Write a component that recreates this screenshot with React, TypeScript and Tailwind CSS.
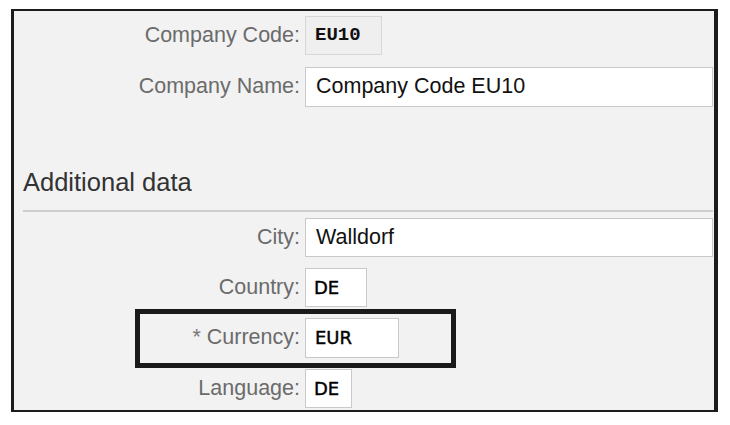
import React from "react";

const labelCls =
  "w-[286px] shrink-0 text-right text-[21.5px] text-[#6b6b6b] leading-none font-['Liberation_Sans',Arial,sans-serif]";

function Row({
  label,
  children,
  className = "",
}: {
  label: React.ReactNode;
  children: React.ReactNode;
  className?: string;
}) {
  return (
    <div className={"relative flex items-stretch " + className}>
      <div className={labelCls + " self-center"}>{label}</div>
      <div className="ml-[5px] flex">{children}</div>
    </div>
  );
}

const boxBase =
  "flex items-center border-[1.5px] border-[#c9c9c9] bg-white";
const textVal =
  "text-[21.5px] text-[#111] font-['Liberation_Sans',Arial,sans-serif] leading-none";
const codeVal =
  "text-[18px] font-normal text-[#000] font-['DejaVu_Sans',Verdana,sans-serif] leading-none [-webkit-text-stroke:0.4px_#000]";

export default function App() {
  return (
    <div className="w-[730px] h-[425px] bg-white overflow-hidden">
      <div className="ml-[11px] mt-[9px] w-[707px] h-[403px] border-l-[3px] border-t-2 border-r-4 border-b-2 border-[#1c1c1c] bg-[#f2f2f2] overflow-hidden pt-[5px]">
        <Row label="Company Code:" className="h-[39px]">
          <div className="flex items-center w-[77px] border-[1.5px] border-[#d6d6d6] bg-[#efefef] pl-[9px]">
            <span className="text-[19px] font-bold text-[#111] font-['Liberation_Mono','Courier_New',monospace] leading-none">
              EU10
            </span>
          </div>
        </Row>
        <Row label="Company Name:" className="h-[40px] mt-[12px]">
          <div className={boxBase + " w-[408px] pl-[10px]"}>
            <span className={textVal}>Company Code EU10</span>
          </div>
        </Row>

        <div className="mt-[60px] ml-[9px] mr-[1px] pb-[13px] border-b-2 border-[#cdcdcd]">
          <div className="text-[25.5px] leading-[30px] text-[#333] font-['Liberation_Sans',Arial,sans-serif]">
            Additional data
          </div>
        </div>

        <Row label="City:" className="h-[39px] mt-[6px]">
          <div className={boxBase + " w-[408px] pl-[10px]"}>
            <span className={textVal}>Walldorf</span>
          </div>
        </Row>
        <Row label="Country:" className="h-[39px] mt-[11px]">
          <div className={boxBase + " w-[62px] pl-[8px]"}>
            <span className={codeVal}>DE</span>
          </div>
        </Row>
        <Row
          label={
            <>
              <span className="text-[#777]">*</span> Currency:
            </>
          }
          className="h-[40px] mt-[11px]"
        >
          <div className={boxBase + " w-[94px] pl-[9px]"}>
            <span className={codeVal}>EUR</span>
          </div>
          <div className="absolute left-[121px] top-[-9px] bottom-[-10px] w-[321px] border-[5px] border-[#1a1a1a] pointer-events-none" />
        </Row>
        <Row label="Language:" className="h-[39px] mt-[11px]">
          <div className={boxBase + " w-[47px] pl-[8px]"}>
            <span className={codeVal}>DE</span>
          </div>
        </Row>
      </div>
    </div>
  );
}
